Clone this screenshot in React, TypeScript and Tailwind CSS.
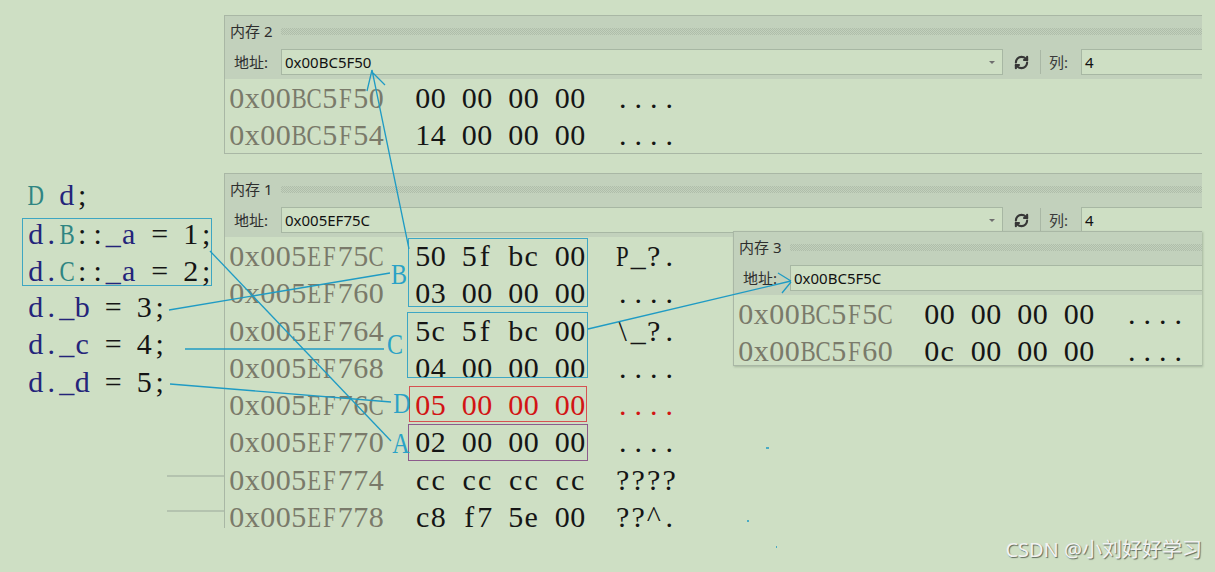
import { RefreshCw } from 'lucide-react'

type Row = { addr: string; bytes: string[]; ascii: string; red?: boolean }

const MEM2: Row[] = [
  { addr: '0x00BC5F50', bytes: ['00', '00', '00', '00'], ascii: '....' },
  { addr: '0x00BC5F54', bytes: ['14', '00', '00', '00'], ascii: '....' },
]

const MEM1: Row[] = [
  { addr: '0x005EF75C', bytes: ['50', '5f', 'bc', '00'], ascii: 'P_?.' },
  { addr: '0x005EF760', bytes: ['03', '00', '00', '00'], ascii: '....' },
  { addr: '0x005EF764', bytes: ['5c', '5f', 'bc', '00'], ascii: '\\_?.' },
  { addr: '0x005EF768', bytes: ['04', '00', '00', '00'], ascii: '....' },
  { addr: '0x005EF76C', bytes: ['05', '00', '00', '00'], ascii: '....', red: true },
  { addr: '0x005EF770', bytes: ['02', '00', '00', '00'], ascii: '....' },
  { addr: '0x005EF774', bytes: ['cc', 'cc', 'cc', 'cc'], ascii: '????' },
  { addr: '0x005EF778', bytes: ['c8', 'f7', '5e', '00'], ascii: '??^.' },
]

const MEM3: Row[] = [
  { addr: '0x00BC5F5C', bytes: ['00', '00', '00', '00'], ascii: '....' },
  { addr: '0x00BC5F60', bytes: ['0c', '00', '00', '00'], ascii: '....' },
]

// [text, colour] pieces of each source line
const NAVY = 'text-[#24247a]'
const TEAL = 'text-[#2f8582]'
const INK = 'text-[#141414]'

type Seg = [string, string]

const LINE_D: Seg[] = [['D', TEAL], [' ', INK], ['d', NAVY], [';', INK]]
const LINE_B: Seg[] = [['d.', NAVY], ['B', TEAL], ['::', INK], ['_a', NAVY], [' = 1;', INK]]
const LINE_C: Seg[] = [['d.', NAVY], ['C', TEAL], ['::', INK], ['_a', NAVY], [' = 2;', INK]]
const LINE_3: Seg[] = [['d.', NAVY], ['_b', NAVY], [' = 3;', INK]]
const LINE_4: Seg[] = [['d.', NAVY], ['_c', NAVY], [' = 4;', INK]]
const LINE_5: Seg[] = [['d.', NAVY], ['_d', NAVY], [' = 5;', INK]]

const UI_FONT = "font-['Noto_Sans','Noto_Sans_CJK_SC',sans-serif]"

// fixed-pitch cells, capitals squeezed to fit like a half-width font
function Mono({ text, className }: { text: string; className?: string }) {
  return (
    <span className={className}>
      {Array.from(text).map((ch, i) => (
        <span key={i} className="inline-flex w-[15.5px] justify-center">
          <span className={/[A-Z]/.test(ch) ? 'inline-block scale-x-[0.76]' : 'inline-block'}>
            {ch === ' ' ? '\u00a0' : ch}
          </span>
        </span>
      ))}
    </span>
  )
}

function CodeLine({ segs }: { segs: Seg[] }) {
  return (
    <div className="h-[37.5px] whitespace-nowrap leading-[37.5px]">
      {segs.map(([t, c], i) => (
        <Mono key={i} text={t} className={c} />
      ))}
    </div>
  )
}

function MemRow({ row }: { row: Row }) {
  const ink = row.red ? 'text-[#d21414]' : 'text-[#151515]'
  return (
    <div className="flex h-[37.3px] whitespace-nowrap leading-[37.3px]">
      <Mono text={row.addr} className="w-[186px] shrink-0 text-[#7a7a6a]" />
      <div className={`flex w-[200px] shrink-0 gap-[15.5px] ${ink}`}>
        {row.bytes.map((b, i) => (
          <Mono key={i} text={b} />
        ))}
      </div>
      <Mono text={row.ascii} className={`shrink-0 ${ink}`} />
    </div>
  )
}

function MemoryPanel({
  title,
  address,
  rows,
  showCols = true,
  className,
  bodyClass,
}: {
  title: string
  address: string
  rows: Row[]
  showCols?: boolean
  className?: string
  bodyClass?: string
}) {
  return (
    <div className={`overflow-hidden border-l border-t border-[#a9b7a5] bg-[#cedfc4] ${className ?? ''}`}>
      <div className={`bg-[#c2d1bc] text-[15px] text-[#2e2e2e] ${UI_FONT}`}>
        <div className="flex h-[30px] items-center pl-[5px]">
          <span className="whitespace-nowrap">{title}</span>
          <div className="ml-[9px] h-[7px] flex-1 bg-[image:repeating-conic-gradient(#afbdaa_0_25%,transparent_0_50%)] bg-[length:2px_2px]" />
        </div>
        <div className="flex h-[33px] items-start pl-[9px] pt-[3px]">
          <span className="w-[47px] shrink-0 leading-[26px]">地址:</span>
          <div
            className={`flex h-[26px] items-center border border-[#a7b7a3] bg-[#cedfc4] pl-[3px] text-[#111] ${
              showCols ? 'w-[722px] shrink-0' : 'flex-1 border-r-0'
            }`}
          >
            <span>{address}</span>
            {showCols && (
              <span className="ml-auto mr-[7px] h-0 w-0 border-x-[3px] border-t-[3px] border-x-transparent border-t-[#6e6e6e]" />
            )}
          </div>
          {showCols && (
            <>
              <div className="flex h-[26px] w-[37px] shrink-0 items-center justify-center">
                <RefreshCw size={15} strokeWidth={3.4} className="text-[#363636]" />
              </div>
              <div className="mt-[1px] h-[24px] w-px shrink-0 bg-[#a9b7a5]" />
              <span className="ml-[8px] w-[32px] shrink-0 leading-[26px] text-[#3a3a3a]">列:</span>
              <div className="flex h-[26px] flex-1 items-center border border-r-0 border-[#a7b7a3] bg-[#cedfc4] pl-[3px] text-[#111]">
                4
              </div>
            </>
          )}
        </div>
      </div>
      <div className={`pl-[4px] font-['Liberation_Serif',serif] text-[30px] ${bodyClass ?? ''}`}>
        {rows.map((r) => (
          <MemRow key={r.addr} row={r} />
        ))}
      </div>
    </div>
  )
}

function Label({ ch, className }: { ch: string; className: string }) {
  return (
    <span
      className={`absolute inline-block scale-x-[0.8] font-['Liberation_Serif',serif] text-[30px] leading-[37px] text-[#2aa2c6] ${className}`}
    >
      {ch}
    </span>
  )
}

export default function App() {
  return (
    <div className="relative h-[572px] w-[1215px] overflow-hidden bg-[#cedfc4] pt-[15px]">
      <MemoryPanel
        title="内存 2"
        address="0x00BC5F50"
        rows={MEM2}
        className="ml-[224px] w-[978px] border-b"
        bodyClass="h-[74px]"
      />

      <div className="mt-[19px] flex">
        {/* source */}
        <div className="w-[224px] shrink-0 pt-[3px] font-['Liberation_Serif',serif] text-[30px]">
          <div className="pl-[28px]">
            <CodeLine segs={LINE_D} />
          </div>
          <div className="ml-[22px] mt-[4px] h-[68px] w-[190px] border border-[#3ea6c2] pl-[5px]">
            <div className="-mt-[4px]">
              <CodeLine segs={LINE_B} />
              <CodeLine segs={LINE_C} />
            </div>
          </div>
          <div className="mt-[2px] pl-[28px]">
            <CodeLine segs={LINE_3} />
            <CodeLine segs={LINE_4} />
            <CodeLine segs={LINE_5} />
          </div>
          <div className="ml-[167px] mt-[75px] h-[2px] w-[57px] bg-[#b4c3af]" />
          <div className="ml-[167px] mt-[33px] h-[2px] w-[57px] bg-[#b4c3af]" />
        </div>

        <MemoryPanel
          title="内存 1"
          address="0x005EF75C"
          rows={MEM1}
          className="h-[355px] w-[978px]"
        />
      </div>

      <MemoryPanel
        title="内存 3"
        address="0x00BC5F5C"
        rows={MEM3}
        showCols={false}
        className="absolute left-[733px] top-[231px] w-[469px] border-b shadow-[1px_1px_2px_rgba(90,110,85,0.35)]"
        bodyClass="h-[70px]"
      />

      {/* byte groupings */}
      <div className="absolute left-[408px] top-[238px] h-[69px] w-[180px] border border-[#3ea6c4]" />
      <div className="absolute left-[407px] top-[312px] h-[66px] w-[181px] border border-[#3ea6c4]" />
      <div className="absolute left-[409px] top-[386px] h-[36px] w-[178px] border border-[#d65252]" />
      <div className="absolute left-[408px] top-[424px] h-[37px] w-[180px] border border-[#8c5b8c]" />

      <Label ch="B" className="left-[389px] top-[255px]" />
      <Label ch="C" className="left-[385px] top-[325px]" />
      <Label ch="D" className="left-[391px] top-[384px]" />
      <Label ch="A" className="left-[390px] top-[424px]" />

      <svg
        className="pointer-events-none absolute inset-0"
        width="1215"
        height="572"
        viewBox="0 0 1215 572"
        fill="none"
        stroke="#1f9bc4"
        strokeWidth="1.3"
      >
        <path d="M409 249 L372 70 M372 70 L367 91 M373 73 L385 85" />
        <path d="M210 251 L391 441" />
        <path d="M169 310 L390 273" />
        <path d="M185 349 L384 349" />
        <path d="M170 384 L391 402" />
        <path d="M588 329 L791 281 M791 281 L778 273 M791 282 L782 293" />
        <path d="M766 448 h3 M747 521 h2 M776 547 h1" />
      </svg>

      <span
        className={`absolute bottom-[7px] right-[13px] text-[20px] text-[#f2f2f2] [text-shadow:1px_1px_1px_#5f6a5c] ${UI_FONT}`}
      >
        CSDN @小刘好好学习
      </span>
    </div>
  )
}
